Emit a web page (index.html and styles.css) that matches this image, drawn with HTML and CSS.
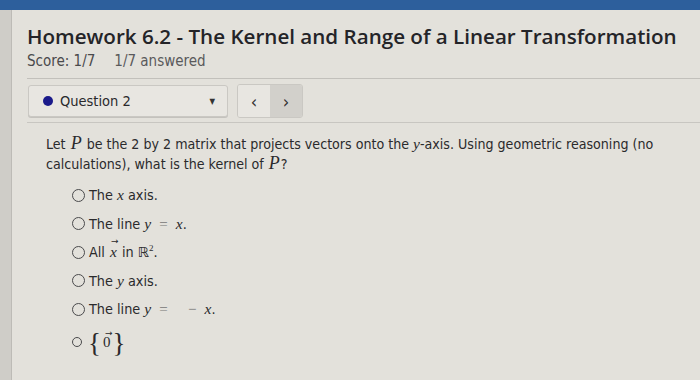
FILE: index.html
```html
<!DOCTYPE html>
<html>
<head>
<meta charset="utf-8">
<link rel="stylesheet" href="styles.css">
</head>
<body>
<div class="topbar"></div>
<div class="frame">
  <div class="side"></div>
  <main class="content">
    <h1 class="title">Homework 6.2 - The Kernel and Range of a Linear Transformation</h1>
    <div class="score"><span>Score: 1/7</span><span class="answered">1/7 answered</span></div>
    <div class="navrow">
      <div class="qselect"><span class="dot"></span><span class="qlabel">Question 2</span><span class="caret">&#9660;</span></div>
      <div class="pager"><span class="pbtn">&#8249;</span><span class="pbtn dark">&#8250;</span></div>
    </div>
    <section class="question">
      <p class="prompt">Let <i class="m big">P</i> be the 2 by 2 matrix that projects vectors onto the <i class="m">y</i>-axis. Using geometric reasoning (no calculations), what is the kernel of <i class="m big">P</i>?</p>
      <ul class="options">
        <li><span class="radio"></span>The <i class="m">x</i> axis.</li>
        <li><span class="radio"></span>The line <i class="m">y</i> <span class="eq">=</span> <i class="m">x</i>.</li>
        <li><span class="radio"></span>All <span class="vec"><i class="m">x</i></span> in <span class="bb">&#8477;</span><sup>2</sup>.</li>
        <li><span class="radio"></span>The <i class="m">y</i> axis.</li>
        <li><span class="radio"></span>The line <i class="m">y</i> <span class="eq">=</span> &nbsp;&nbsp;<span class="eq">&minus;</span> <i class="m">x</i>.</li>
        <li class="last"><span class="radio small"></span><span class="brace">{</span><span class="vec zero">0</span><span class="brace">}</span></li>
      </ul>
    </section>
  </main>
</div>
</body>
</html>
```
FILE: styles.css
```css
html, body { margin: 0; padding: 0; }
body {
  width: 700px; height: 380px; overflow: hidden;
  background: #e3e1db;
  font-family: "DejaVu Sans Condensed", "DejaVu Sans", sans-serif;
  color: #2a2a2c;
}
.topbar { height: 10px; background: #2d5f9c; }
.frame { display: flex; height: 370px; }
.side { width: 11px; background: #cfcdc8; border-right: 1px solid #bdbbb6; }
.content { flex: 1; padding-left: 15px; }
.title {
  margin: 13px 0 0 0; font-size: 20.6px; font-weight: 600; letter-spacing: 0;
  font-family: "Open Sans", sans-serif; color: #242428; line-height: 26px;
}
.score { font-size: 15px; color: #4a4a4c; margin-top: 2px; display: flex; gap: 19px; line-height: 20px; }
.answered { color: #5a5a5c; }
.navrow {
  margin-top: 7px; border-top: 1px solid #c2c0bb; border-bottom: 1px solid #c8c6c1;
  padding: 5px 0 4px 1px; display: flex; gap: 9px; align-items: center;
}
.qselect {
  width: 200px; height: 32px; box-sizing: border-box;
  border: 1px solid #cac8c3; border-radius: 3px; background: #e8e6e1;
  display: flex; align-items: center; padding: 0 12px 0 14px; font-size: 14.5px;
  box-shadow: 0 1px 0 #c4c2bd;
}
.dot { width: 10px; height: 10px; border-radius: 50%; background: #1a1a8a; margin-right: 7px; }
.qlabel { flex: 1; }
.caret { font-size: 8px; color: #333; }
.pager { display: flex; height: 32px; border: 1px solid #cac8c3; border-radius: 3px; overflow: hidden; }
.pbtn { width: 32px; display: flex; align-items: center; justify-content: center; font-size: 18px; background: #e8e6e1; color: #333; }
.pbtn.dark { background: #d2d0cb; }
.question { padding-left: 19px; }
.prompt { margin: 11px 0 0 0; font-size: 14.1px; line-height: 20px; width: 630px; }
.m { font-family: "Liberation Serif", serif; font-style: italic; font-size: 15.5px; line-height: 1; }
.m.big { font-size: 18px; margin: 0 1px; }
.options { list-style: none; margin: 7px 0 0 26px; padding: 0; font-size: 14.3px; }
.options li { height: 28.5px; line-height: 28.5px; white-space: nowrap; }
.options li.last { height: 36px; line-height: 36px; }
.radio { display: inline-block; vertical-align: middle; width: 13px; height: 13px; border: 1.5px solid #4a4a4c; border-radius: 50%; margin: -2px 4px 0 0; box-sizing: border-box; }
.radio.small { width: 10px; height: 10px; border-width: 1px; margin-right: 6px; }
.eq { font-family: "Liberation Serif", serif; color: #777; margin: 0 4px; font-size: 15px; }
.vec { position: relative; display: inline-block; line-height: 1; margin: 0 1px; }
.vec::before { content: "\2192"; position: absolute; top: -7px; left: 1px; font-size: 9px; font-family: "DejaVu Sans", sans-serif; font-style: normal; }
.bb { font-family: "DejaVu Sans", sans-serif; font-size: 14px; }
sup { font-size: 9px; font-family: "Liberation Serif", serif; line-height: 0; }
.brace { font-family: "Liberation Serif", serif; font-size: 27px; font-weight: 300; vertical-align: middle; line-height: 1; }
.vec.zero { font-family: "Liberation Serif", serif; font-size: 15px; margin: 0 2px; vertical-align: middle; }
.vec.zero::before { top: -6px; left: 2px; }
```
